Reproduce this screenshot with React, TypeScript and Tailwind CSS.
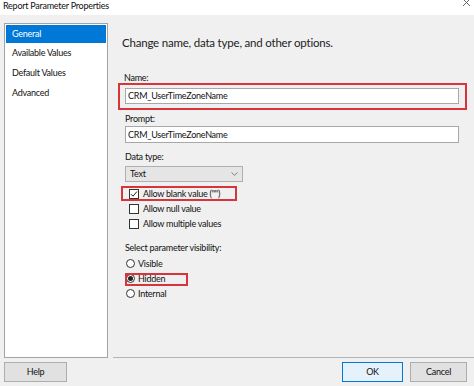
import React from "react";

const nav = ["General", "Available Values", "Default Values", "Advanced"];

function Check({ checked }: { checked?: boolean }) {
  return (
    <span className="w-[10px] h-[10px] border border-[#333] bg-white flex items-center justify-center shrink-0">
      {checked && (
        <svg width="8" height="8" viewBox="0 0 8 8">
          <path d="M1 4.2 L3 6.2 L7 1.5" fill="none" stroke="#222" strokeWidth="1" />
        </svg>
      )}
    </span>
  );
}

function Radio({ on }: { on?: boolean }) {
  return (
    <span className="w-[9px] h-[9px] rounded-full border border-[#333] bg-white flex items-center justify-center shrink-0">
      {on && <span className="w-[5px] h-[5px] rounded-full bg-[#222]" />}
    </span>
  );
}

export default function App() {
  return (
    <div className="w-[474px] h-[386px] flex flex-col bg-[#f0f0f0] overflow-hidden font-['Lato',sans-serif] text-[9px] tracking-[-0.25px] text-[#111]">
      {/* title bar */}
      <div className="h-[15px] shrink-0 bg-white flex items-start justify-between pl-[3px] pr-[3px]">
        <span className="leading-[12px]">Report Parameter Properties</span>
        <svg width="9" height="8" viewBox="0 0 9 8" className="mt-[-1px]">
          <path d="M1 0 L8 7 M8 0 L1 7" stroke="#555" strokeWidth="0.9" fill="none" />
        </svg>
      </div>

      <div className="flex h-[343px] shrink-0">
        {/* left nav */}
        <div className="pl-[4px] pt-[8px]">
          <div className="w-[104px] h-[335px] bg-white border border-[#a3a3a3] p-[1px]">
            {nav.map((item, i) =>
              i === 0 ? (
                <div key={item} className="h-[18px] bg-[#0078d7] text-white flex items-center pl-[6px]">
                  {item}
                </div>
              ) : (
                <div key={item} className="h-[20px] flex items-center pl-[6px]">
                  {item}
                </div>
              )
            )}
          </div>
        </div>

        {/* right panel */}
        <div className="ml-[5px] flex-1 border-b border-[#b4b4b4] flex flex-col pl-[9px]">
          <div className="mt-[20px] text-[11.5px] tracking-[-0.2px] leading-[16px] text-[#222]">
            Change name, data type, and other options.
          </div>

          <div className="pl-[3px] flex flex-col">
            <div className="mt-[20px] leading-[14px] -ml-[1px]">Name:</div>
            <div className="relative mt-[3px] w-[334px] h-[16px] bg-white border border-[#a8a8a8] flex items-center pl-[2px]">
              CRM_UserTimeZoneName
              <div className="absolute -left-[8px] -right-[9px] -top-[6px] -bottom-[7px] border-2 border-[#d8343c]" />
            </div>

            <div className="mt-[8px] leading-[14px]">Prompt:</div>
            <div className="w-[334px] h-[17px] bg-white border border-[#a8a8a8] flex items-center pl-[2px]">
              CRM_UserTimeZoneName
            </div>

            <div className="mt-[7px] leading-[14px]">Data type:</div>
            <div className="mt-[2px] w-[118px] h-[16px] bg-[#e5e5e5] border border-[#b0b0b0] flex items-center justify-between pl-[4px] pr-[4px]">
              <span>Text</span>
              <svg width="7" height="4" viewBox="0 0 7 4">
                <path d="M0.5 0.5 L3.5 3.3 L6.5 0.5" stroke="#666" strokeWidth="0.8" fill="none" />
              </svg>
            </div>

            <div className="mt-[4px] flex flex-col">
              <div className="relative h-[15px] flex items-center gap-[4px] pl-[4px]">
                <Check checked />
                <span>Allow blank value ("")</span>
                <div className="absolute -left-[4px] top-0 w-[116px] h-[15px] border-2 border-[#d8343c]" />
              </div>
              <div className="h-[15px] flex items-center gap-[4px] pl-[4px]">
                <Check />
                <span>Allow null value</span>
              </div>
              <div className="h-[15px] flex items-center gap-[4px] pl-[4px]">
                <Check />
                <span>Allow multiple values</span>
              </div>
            </div>

            <div className="mt-[10px] leading-[14px]">Select parameter visibility:</div>
            <div className="mt-[1px] flex flex-col">
              <div className="h-[15px] flex items-center gap-[3px] pl-[1px]">
                <Radio />
                <span>Visible</span>
              </div>
              <div className="relative h-[15px] flex items-center gap-[3px] pl-[1px]">
                <Radio on />
                <span>Hidden</span>
                <div className="absolute left-0 top-[2px] w-[63px] h-[13px] border-2 border-[#d8343c]" />
              </div>
              <div className="h-[15px] flex items-center gap-[3px] pl-[1px]">
                <Radio />
                <span>Internal</span>
              </div>
            </div>
          </div>
        </div>
      </div>

      {/* buttons */}
      <div className="mt-[4px] flex items-center justify-between pl-[4px] pr-[7px]">
        <button className="w-[63px] h-[20px] bg-[#e1e1e1] border border-[#adadad] flex items-center justify-center">
          Help
        </button>
        <div className="flex gap-[7px]">
          <button className="w-[61px] h-[20px] bg-[#e5f1fb] border border-[#0078d7] flex items-center justify-center">
            OK
          </button>
          <button className="w-[57px] h-[20px] bg-[#e1e1e1] border border-[#adadad] flex items-center justify-center">
            Cancel
          </button>
        </div>
      </div>
    </div>
  );
}
